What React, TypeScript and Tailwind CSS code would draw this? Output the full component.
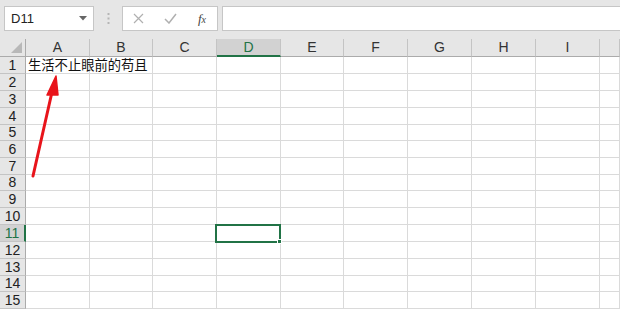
import React from 'react';

const COLS = ['A', 'B', 'C', 'D', 'E', 'F', 'G', 'H', 'I', ''];
const ROW_H = [17, 17, 17, 17, 16, 17, 17, 16, 17, 17, 17, 17, 17, 16, 17];

const gridCols = 'grid-cols-[26px_64px_63px_64px_64px_63px_64px_64px_64px_64px_1fr]';

function App() {
  return (
    <div className="relative w-[620px] h-[309px] overflow-hidden bg-white font-['Liberation_Sans',sans-serif] select-none">
      {/* formula bar */}
      <div className="h-[39px] bg-[#e6e6e6] flex items-start pt-[6px] pl-[4px]">
        <div className="w-[90px] h-[25px] bg-white border border-[#c6c6c6] flex items-center justify-between pl-[6px] pr-[6px]">
          <span className="text-[13px] text-[#222]">D11</span>
          <svg width="8" height="5" viewBox="0 0 8 5"><path d="M0 0h8L4 4.5z" fill="#666" /></svg>
        </div>
        <div className="w-[28px] h-[25px] flex items-center justify-center">
          <svg width="3" height="11" viewBox="0 0 3 11">
            <rect x="0.5" y="0" width="2" height="2" fill="#b5b5b5" />
            <rect x="0.5" y="4.5" width="2" height="2" fill="#b5b5b5" />
            <rect x="0.5" y="9" width="2" height="2" fill="#b5b5b5" />
          </svg>
        </div>
        <div className="w-[96px] h-[25px] bg-white border border-[#c6c6c6] flex items-center">
          <div className="w-[30px] flex justify-center">
            <svg width="11" height="11" viewBox="0 0 11 11"><path d="M1 1l9 9M10 1l-9 9" stroke="#b0b0b0" strokeWidth="1.2" /></svg>
          </div>
          <div className="w-[34px] flex justify-center">
            <svg width="13" height="11" viewBox="0 0 13 11"><path d="M1 6l4 4 7-9" stroke="#b0b0b0" strokeWidth="1.5" fill="none" /></svg>
          </div>
          <div className="w-[30px] flex justify-center">
            <span className="font-['Liberation_Serif',serif] italic text-[13px] text-[#444] leading-none">f<span className="text-[10px]">x</span></span>
          </div>
        </div>
        <div className="ml-[4px] flex-1 h-[25px] bg-white border-y border-l border-[#c6c6c6]" />
      </div>

      {/* sheet */}
      <div className={`grid ${gridCols} w-[620px]`}>
        {/* corner */}
        <div className="h-[18px] bg-[#e6e6e6] border-b border-r border-[#ababab] flex items-end justify-end pr-[3px] pb-[3px]">
          <svg width="11" height="11" viewBox="0 0 11 11"><path d="M11 0v11H0z" fill="#b8b8b8" /></svg>
        </div>
        {COLS.map((c) =>
          c === 'D' ? (
            <div key={c} className="h-[18px] bg-[#d2d2d2] border-b-2 border-r border-b-[#217346] border-r-[#c4c4c4] flex items-center justify-center text-[14px] text-[#217346] pt-[1px]">
              {c}
            </div>
          ) : (
            <div key={c || 'x'} className="h-[18px] bg-[#e6e6e6] border-b border-r border-b-[#ababab] border-r-[#c4c4c4] flex items-center justify-center text-[14px] text-[#333]">
              {c}
            </div>
          )
        )}

        {ROW_H.map((h, ri) => {
          const r = ri + 1;
          const hc = h === 17 ? 'h-[17px]' : 'h-[16px]';
          return (
            <React.Fragment key={r}>
              {r === 11 ? (
                <div className={`${hc} bg-[#d2d2d2] border-b border-r-2 border-b-[#c4c4c4] border-r-[#217346] flex items-center justify-center text-[14px] text-[#217346]`}>
                  {r}
                </div>
              ) : (
                <div className={`${hc} bg-[#e6e6e6] border-b border-r border-b-[#c4c4c4] border-r-[#ababab] flex items-center justify-center text-[14px] text-[#222]`}>
                  {r}
                </div>
              )}
              {COLS.map((c, ci) => (
                <div key={ci} className={`${hc} relative border-b border-r border-[#dadada]`}>
                  {r === 1 && c === 'A' && (
                    <span className="absolute left-[2px] top-[-1px] whitespace-nowrap text-[13.3px] leading-[17px] text-[#111] font-['Noto_Sans_CJK_SC',sans-serif] z-10">
                      生活不止眼前的苟且
                    </span>
                  )}
                  {r === 11 && c === 'D' && (
                    <div className="absolute -left-[2px] -top-[1px] w-[66px] h-[19px] border-2 border-[#217346] z-10">
                      <div className="absolute -right-[3px] -bottom-[3px] w-[5px] h-[5px] bg-[#217346] border border-white" />
                    </div>
                  )}
                </div>
              ))}
            </React.Fragment>
          );
        })}
      </div>

      {/* annotation arrow */}
      <svg className="absolute left-0 top-0 pointer-events-none" width="620" height="309" viewBox="0 0 620 309">
        <path d="M33 176 L52 92" stroke="#e8141b" strokeWidth="3" strokeLinecap="round" fill="none" />
        <path d="M56 76 L47 95 L58 95 Z" fill="#e8141b" stroke="#e8141b" strokeWidth="1.5" strokeLinejoin="round" />
      </svg>
    </div>
  );
}

export default App;
